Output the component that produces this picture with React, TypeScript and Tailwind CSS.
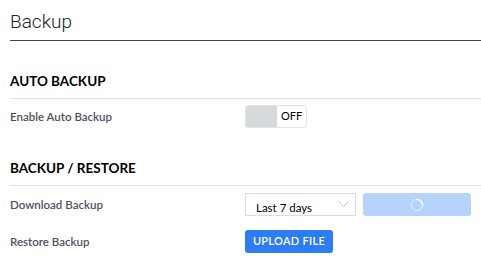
import React, { useState } from 'react';

const App: React.FC = () => {
  const [autoBackup, setAutoBackup] = useState(false);
  const [range, setRange] = useState('Last 7 days');

  return (
    <div className="min-h-screen bg-white pl-[10px] font-['Lato',sans-serif] text-[#222]">
      {/* Title */}
      <h1 className="pt-[10px] pb-[7px] border-b border-[#3f444a] font-['Roboto',sans-serif] font-light text-[19px] leading-[23px] text-[#222]">
        Backup
      </h1>

      {/* Auto backup */}
      <section className="mt-[31px]">
        <h2 className="pb-[8px] border-b border-[#e3e3e3] text-[13.5px] leading-[18px] font-bold text-black">
          AUTO BACKUP
        </h2>
        <div className="flex items-center h-[23px] mt-[6px]">
          <div className="w-[235px] text-[11.5px] font-semibold text-[#50505e]">Enable Auto Backup</div>
          <button
            onClick={() => setAutoBackup(!autoBackup)}
            className="flex h-[23px] w-[62px] rounded-[3px] border border-[#e2e2e2] overflow-hidden bg-white"
          >
            <span className="w-[31px] h-full bg-[#d6dadd]" />
            <span className="flex-1 flex items-center justify-center text-[11px] text-black">
              {autoBackup ? 'ON' : 'OFF'}
            </span>
          </button>
        </div>
      </section>

      {/* Backup / restore */}
      <section className="mt-[31px]">
        <h2 className="pb-[8px] border-b border-[#e3e3e3] text-[13.5px] leading-[18px] font-bold text-black">
          BACKUP / RESTORE
        </h2>
        <div className="flex items-center h-[23px] mt-[7px]">
          <div className="w-[235px] text-[11.5px] font-semibold text-[#50505e]">Download Backup</div>
          <div className="relative w-[111px] h-[23px] border border-[#dcdcdc] bg-white">
            <select
              value={range}
              onChange={e => setRange(e.target.value)}
              className="appearance-none w-full h-full pl-[10px] pr-6 text-[11.5px] text-black bg-transparent outline-none"
            >
              <option>Last 7 days</option>
              <option>Last 30 days</option>
              <option>All</option>
            </select>
            <svg className="absolute right-[6px] top-[7px] w-[11px] h-[7px] pointer-events-none" viewBox="0 0 11 7" fill="none" stroke="#c8c8c8" strokeWidth="1">
              <path d="M0.5 0.5 L5.5 5.5 L10.5 0.5" />
            </svg>
          </div>
          <button className="ml-[7px] w-[108px] h-[23px] rounded-[3px] bg-[#b5d3fd] flex items-center justify-center">
            <svg className="w-[14px] h-[14px]" viewBox="0 0 14 14" fill="none">
              <circle cx="7" cy="7" r="5.5" stroke="#d6e6fe" strokeWidth="1.4" />
              <path d="M7 1.5 A5.5 5.5 0 0 1 12.5 7" stroke="#ffffff" strokeWidth="1.4" strokeLinecap="round" />
            </svg>
          </button>
        </div>
        <div className="flex items-center h-[23px] mt-[14px]">
          <div className="w-[235px] text-[11.5px] font-semibold text-[#50505e]">Restore Backup</div>
          <button className="w-[88px] h-[23px] rounded-[3px] bg-[#2e7bf6] text-white text-[11px] font-semibold tracking-[0.3px]">
            UPLOAD FILE
          </button>
        </div>
      </section>
    </div>
  );
};

export default App;
